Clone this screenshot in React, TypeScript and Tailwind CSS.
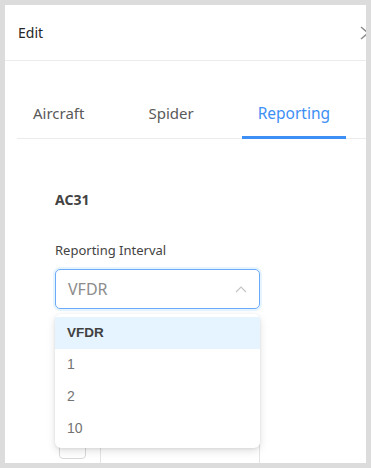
import React from "react";

export default function App() {
  const font = { fontFamily: '"Noto Sans", "Open Sans", sans-serif' };
  return (
    <div className="w-[371px] h-[468px] bg-[#dcdcdc] p-[5px] box-border" style={font}>
      <div className="relative w-full h-full bg-white overflow-hidden">
        <div className="h-[56px] flex items-center justify-between pl-[13px] border-b border-[#ececec]">
          <span className="text-[14px] text-[#262626]">Edit</span>
          <svg width="12" height="14" viewBox="0 0 12 14" className="mr-[-6px]">
            <path d="M1 1 L8 7 L1 13" stroke="#8c8c8c" strokeWidth="1.4" fill="none" />
          </svg>
        </div>
        <div className="ml-[12px] mt-[40px] flex gap-8 border-b border-[#ececec] text-[15px]">
          <div className="px-4 pb-[13px] pt-[1px] text-[#595959]">Aircraft</div>
          <div className="px-4 pb-[13px] pt-[1px] text-[#595959]">Spider</div>
          <div className="px-4 pb-[11px] pt-[1px] text-[#3d8ff5] border-b-[3px] border-[#3d8ff5] mb-[-1px] text-[15.5px]">Reporting</div>
        </div>
        <div className="pl-[50px] pt-[50px]">
          <div className="text-[14px] font-bold text-[#434343]">AC31</div>
          <div className="mt-[31px] text-[13px] text-[#434343]">Reporting Interval</div>
          <div className="relative mt-[8px] w-[205px]">
            <div className="h-[40px] rounded-[5px] border border-[#6aaaf8] shadow-[0_0_0_2px_rgba(5,145,255,0.1)] flex items-center justify-between pl-[12px] pr-[12px]">
              <span className="text-[16px] text-[#8c8c8c]">VFDR</span>
              <svg width="12" height="8" viewBox="0 0 12 8">
                <path d="M1 7 L6 2 L11 7" stroke="#c4c4c4" strokeWidth="1.2" fill="none" />
              </svg>
            </div>
            <div className="mt-[133px] flex gap-[14px] pl-[4px]">
              <div className="w-[27px] h-[17px] rounded-[4px] border border-[#d9d9d9]" />
              <div className="w-[160px] h-[40px] rounded-[4px] border border-[#e4e4e4]" />
            </div>
            <div
              className="absolute left-0 top-[45px] w-[205px] bg-white rounded-[6px] py-[3px] shadow-[0_3px_8px_rgba(0,0,0,0.12),0_1px_3px_rgba(0,0,0,0.08)]"
              style={{ fontFamily: '"Liberation Sans", Arial, sans-serif' }}
            >
              <div className="h-[32px] flex items-center pl-[12px] bg-[#e6f4ff] text-[13.5px] font-semibold text-[#404040]">VFDR</div>
              <div className="h-[32px] flex items-center pl-[12px] text-[14px] text-[#737373]">1</div>
              <div className="h-[32px] flex items-center pl-[12px] text-[14px] text-[#737373]">2</div>
              <div className="h-[32px] flex items-center pl-[12px] text-[14px] text-[#737373]">10</div>
            </div>
          </div>
        </div>
      </div>
    </div>
  );
}
